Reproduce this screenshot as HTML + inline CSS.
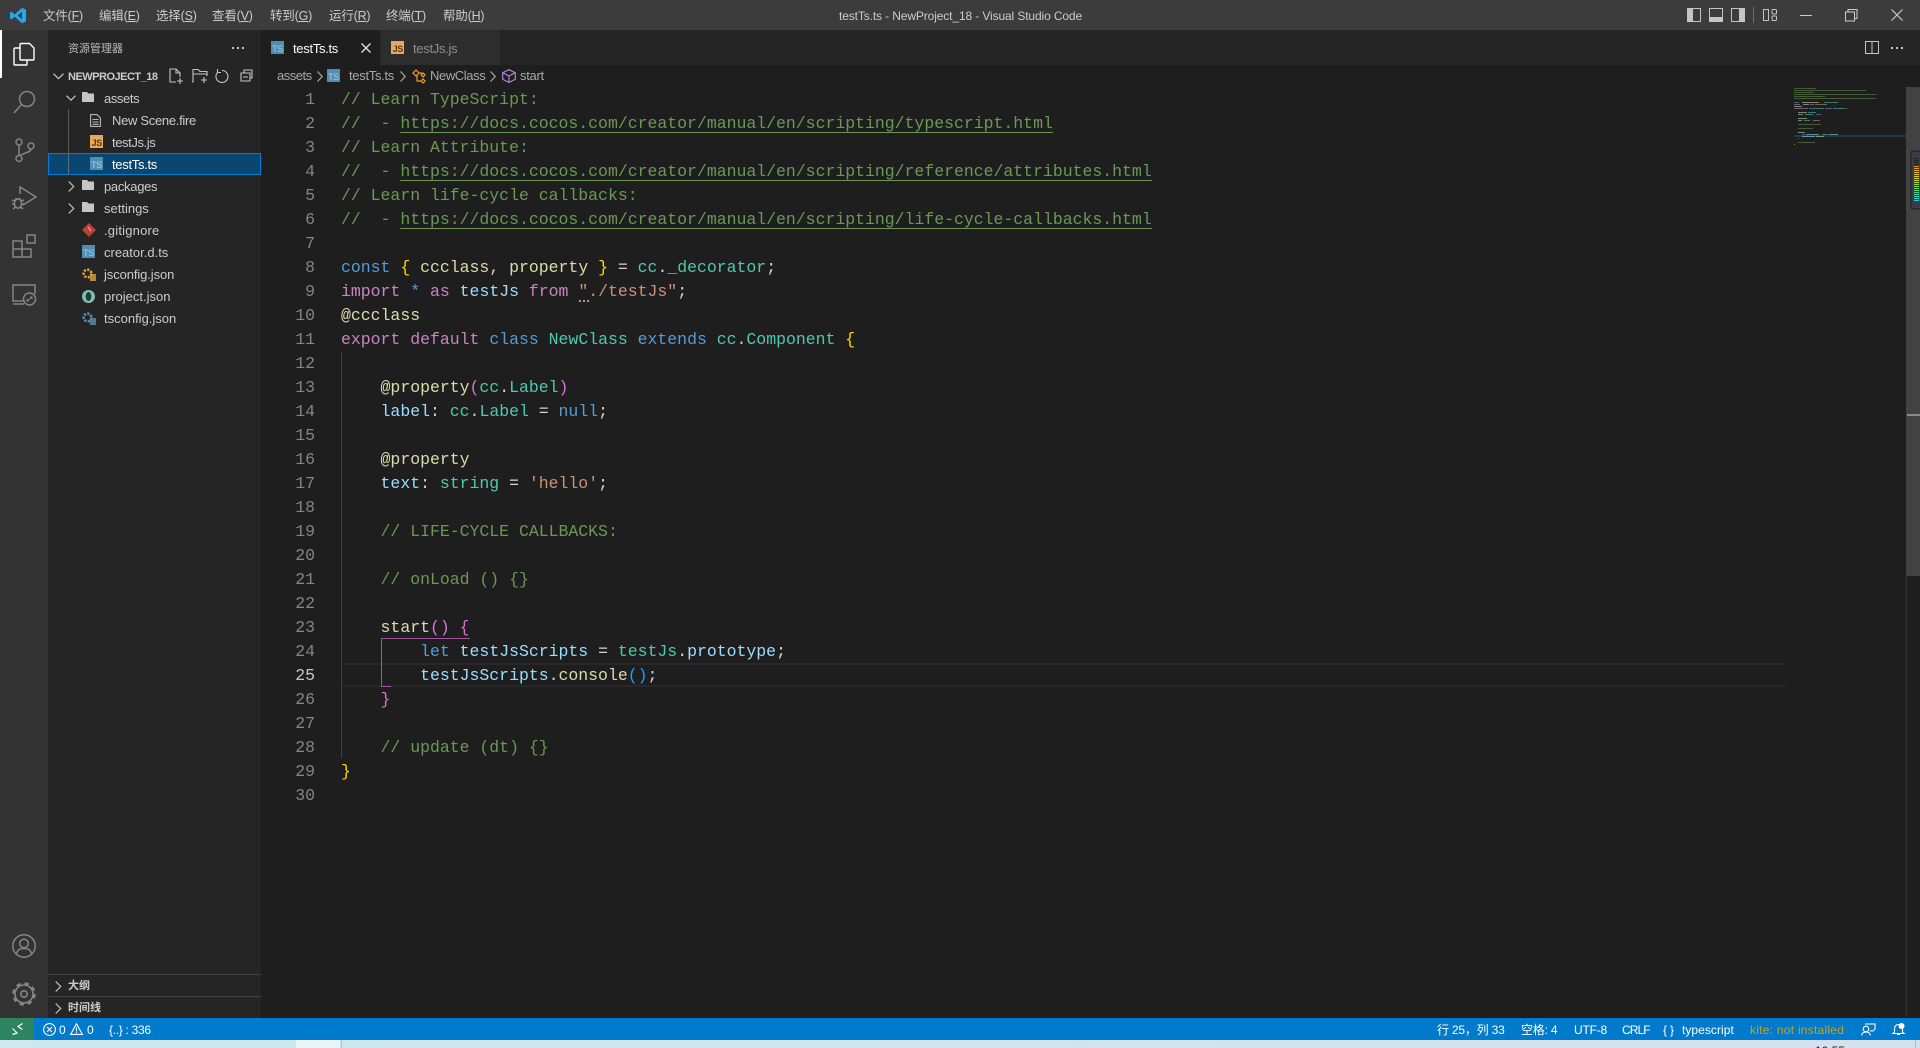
<!DOCTYPE html>
<html lang="zh">
<head>
<meta charset="utf-8">
<title>testTs.ts - NewProject_18 - Visual Studio Code</title>
<style>
*{box-sizing:border-box;margin:0;padding:0}
html,body{width:1920px;height:1048px;overflow:hidden;background:#1e1e1e}
body{position:relative;font-family:"Liberation Sans","Noto Sans CJK SC",sans-serif;font-size:13px;color:#ccc}
.a{position:absolute;white-space:pre}
svg{position:absolute;overflow:visible}
#title{left:0;top:0;width:1920px;height:30px;background:#3c3c3c}
#act{left:0;top:30px;width:48px;height:988px;background:#333}
#side{left:48px;top:30px;width:213px;height:988px;background:#252526}
#tabs{left:261px;top:30px;width:1659px;height:35px;background:#252526}
.m{top:8px;height:16px;line-height:16px;font-size:12.5px;color:#ccc;letter-spacing:-.2px}
.m u{text-decoration:underline;text-underline-offset:1px}
.row{left:48px;width:213px;height:22px;line-height:22px;letter-spacing:-.3px;font-size:13px}
.row span{position:absolute;top:1px}
.ts,.js{position:absolute;width:13px;height:13px;font:normal 9px/16px "Liberation Sans",sans-serif;text-align:right;padding-right:1px;letter-spacing:-.3px}
.ts{background:#4f8eb0;color:#a9cde0}
.js{background:#e6a85c;color:#5a3a14;font-weight:bold}
.chev{position:absolute;fill:none;stroke:#c5c5c5;stroke-width:1.2}
.crumb{top:67px;height:18px;line-height:18px;font-size:13px;color:#a9a9a9;letter-spacing:-.3px}
#code,#nums{font-family:"Liberation Mono",monospace;font-size:16.5px;line-height:24px}
#code{left:341px;top:87.5px;color:#d4d4d4;letter-spacing:-.015px}
#nums{left:270px;top:87.5px;width:45px;text-align:right;color:#858585}
.c{color:#6a9955}
.u{color:#6a9955;text-decoration:underline;text-decoration-thickness:1px;text-underline-offset:4px}
.k{color:#569cd6}.p{color:#c586c0}.v{color:#9cdcfe}.t{color:#4ec9b0}.f{color:#dcdcaa}
.s{color:#ce9178}.g{color:#ffd700}.o{color:#da70d6}.b{color:#179fff}
#status{left:0;top:1018px;width:1920px;height:22px;background:#007acc}
.st{top:1019px;height:22px;line-height:22px;font-size:12px;color:#fff;letter-spacing:-.2px}
#desk{left:0;top:1040px;width:1920px;height:8px;background:linear-gradient(90deg,#cfe7ef 0,#d3e4ee 50%,#d6dfec 100%);overflow:hidden}
</style>
</head>
<body>

<!-- title bar -->
<div class="a" id="title"></div>
<svg style="left:9px;top:7px" width="18" height="17" viewBox="0 0 18 17"><path d="M13 0.8 17 2.6V14.4L13 16.2 5.8 9.6 2.4 12.2 1 11.5V5.5L2.4 4.8 5.8 7.4ZM13 4.8 8.6 8.5 13 12.2Z" fill="#23a9f2" fill-rule="evenodd"/></svg>
<div class="a m" style="left:43px">文件(<u>F</u>)</div>
<div class="a m" style="left:99px">编辑(<u>E</u>)</div>
<div class="a m" style="left:156px">选择(<u>S</u>)</div>
<div class="a m" style="left:212px">查看(<u>V</u>)</div>
<div class="a m" style="left:270px">转到(<u>G</u>)</div>
<div class="a m" style="left:329px">运行(<u>R</u>)</div>
<div class="a m" style="left:386px">终端(<u>T</u>)</div>
<div class="a m" style="left:443px">帮助(<u>H</u>)</div>
<div class="a" style="left:839px;top:8px;height:16px;line-height:16px;font-size:12px;color:#ccc;letter-spacing:-.12px">testTs.ts - NewProject_18 - Visual Studio Code</div>
<svg style="left:1687px;top:8px" width="70" height="14" viewBox="0 0 70 14">
<g fill="none" stroke="#c5c5c5" stroke-width="1"><rect x=".5" y=".5" width="13" height="13"/><rect x="22.5" y=".5" width="13" height="13"/><rect x="44.5" y=".5" width="13" height="13"/></g>
<rect x="1" y="1" width="5" height="12" fill="#c5c5c5"/><rect x="23" y="9" width="12" height="4" fill="#c5c5c5"/><rect x="52" y="1" width="5" height="12" fill="#c5c5c5"/>
</svg>
<div class="a" style="left:1753px;top:7px;width:1px;height:16px;background:#6b6b6b"></div>
<svg style="left:1763px;top:9px" width="14" height="13" fill="none" stroke="#c5c5c5"><rect x=".5" y=".5" width="5" height="11"/><rect x="9" y=".5" width="4.5" height="4.5" rx="1"/><rect x="9" y="7" width="4.5" height="4.5" rx="1"/></svg>
<div class="a" style="left:1800px;top:15px;width:12px;height:1px;background:#ccc"></div>
<svg style="left:1845px;top:9px" width="13" height="13" fill="none" stroke="#ccc"><rect x=".5" y="3" width="9" height="9"/><path d="M3 3V.5h9v9H9.5"/></svg>
<svg style="left:1891px;top:9px" width="12" height="12" fill="none" stroke="#ccc" stroke-width="1.2"><path d="M.5.5 11.5 11.5M11.5.5 .5 11.5"/></svg>

<!-- activity bar -->
<div class="a" id="act"></div>
<div class="a" style="left:0;top:30px;width:2px;height:48px;background:#fff"></div>
<svg style="left:12px;top:42px" width="24" height="24" viewBox="0 0 24 24" fill="none" stroke="#fff" stroke-width="1.4"><path d="M9 1.5H17.5L22 6V17a1 1 0 0 1-1 1H9a1 1 0 0 1-1-1V2.5a1 1 0 0 1 1-1Z"/><path d="M8 6H3A1.2 1.2 0 0 0 2 7V22a1 1 0 0 0 1 1H14a1 1 0 0 0 1-1V18"/></svg>
<svg style="left:12px;top:90px" width="24" height="24" viewBox="0 0 24 24" fill="none" stroke="#858585" stroke-width="1.5"><circle cx="15" cy="9" r="7.5"/><path d="M9.5 14.5 2 23"/></svg>
<svg style="left:12px;top:138px" width="24" height="24" viewBox="0 0 24 24" fill="none" stroke="#858585" stroke-width="1.5"><circle cx="7" cy="4" r="3"/><circle cx="7" cy="20.5" r="3"/><circle cx="19" cy="8" r="3"/><path d="M7 7V17.5M19 11C18.5 15 11 14.5 8 18"/></svg>
<svg style="left:12px;top:186px" width="24" height="24" viewBox="0 0 24 24" fill="none" stroke="#858585" stroke-width="1.5"><path d="M8 8V1L24 11 11 19"/><ellipse cx="6" cy="17.5" rx="3.6" ry="4.6"/><path d="M0 14 3 15M0 18H2.5M1 23 3.5 21M12 14 9 15M12 18H9.5M11 23 8.5 21M3 13H9"/></svg>
<svg style="left:12px;top:234px" width="24" height="24" viewBox="0 0 24 24" fill="none" stroke="#858585" stroke-width="1.5"><path d="M1 7H10V23H1ZM1 15H19V23H10V7"/><rect x="15" y="1" width="8" height="8"/></svg>
<svg style="left:12px;top:284px" width="24" height="22" viewBox="0 0 24 22" fill="none" stroke="#858585" stroke-width="1.5"><path d="M11 17H1V1H23V10M1 20H12"/><circle cx="17.5" cy="15" r="6" fill="#333"/><path d="M15 17 20 13M15 15l0 2 2 0M20 15v-2h-2" stroke-width="1"/></svg>
<svg style="left:12px;top:934px" width="24" height="24" viewBox="0 0 24 24" fill="none" stroke="#858585" stroke-width="1.5"><circle cx="12" cy="12" r="11.2"/><circle cx="12" cy="9.5" r="4.3"/><path d="M4.5 20C5 16 8 14.5 12 14.5S19 16 19.500 20"/></svg>
<svg style="left:12px;top:982px" width="24" height="24" viewBox="0 0 24 24" fill="none" stroke="#858585"><circle cx="12" cy="12" r="9" stroke-width="1.6"/><circle cx="12" cy="12" r="10.4" stroke-width="2.8" stroke-dasharray="4.2 4"/><circle cx="12" cy="12" r="3.2" stroke-width="1.6"/></svg>

<!-- sidebar -->
<div class="a" id="side"></div>
<div class="a" style="left:68px;top:41px;height:16px;line-height:16px;font-size:11px;color:#bbb">资源管理器</div>
<svg style="left:232px;top:47px" width="12" height="3" fill="#c5c5c5"><rect width="2" height="2"/><rect x="5" width="2" height="2"/><rect x="10" width="2" height="2"/></svg>

<div class="a row" style="top:65px;font-weight:bold;font-size:11px;letter-spacing:-.5px;color:#ccc"><span style="left:20px">NEWPROJECT_18</span></div>
<svg class="chev" style="left:53px;top:73px" width="11" height="7"><path d="M.5 .7 5.500 5.700 10.500 .7"/></svg>
<svg style="left:168px;top:68px" width="88" height="16" viewBox="0 0 88 16" fill="none" stroke="#c5c5c5" stroke-width="1.1">
<path d="M8 14H2V1H8L12 5V9M8 1V5H12M12 10V16M9 13H15"/>
<path d="M24 14H25V1.500H30L32 3.500H39V8M36 9V15M33 12H39M25 6H39"/>
<path d="M50 4A6 6 0 1 0 54 2.500M49.500 1V4.500H53"/>
<path d="M73 5H82V13H73ZM76 5V2H84V10H82M75 9H80"/>
</svg>

<div class="a row" style="top:87px;letter-spacing:-.4px"><span style="left:56px;color:#ccc">assets</span></div>
<svg class="chev" style="left:66px;top:95px" width="10" height="7"><path d="M.5 .7 5 5.200 9.500 .7"/></svg>
<svg style="left:82px;top:92px" width="13" height="11" fill="#c5c5c5"><path d="M0 0H5L6.500 1.500H12V10H0Z"/></svg>
<div class="a" style="left:68px;top:109px;width:1px;height:66px;background:#585858"></div>

<div class="a row" style="top:109px"><span style="left:64px;color:#ccc">New Scene.fire</span></div>
<svg style="left:90px;top:114px" width="11" height="13" fill="none" stroke="#b8b8b8" stroke-width="1.1"><path d="M.6.6H7L10.400 4V12.400H.6ZM2.500 5.500H8.500M2.500 8H8.500M2.500 10.300H8.500"/></svg>

<div class="a row" style="top:131px;letter-spacing:-.4px"><i class="js" style="left:42px;top:4px">JS</i><span style="left:64px;color:#ccc">testJs.js</span></div>

<div class="a" style="left:48px;top:153px;width:213px;height:22px;background:#094771;border:1px solid #007fd4"></div>
<div class="a" style="left:68px;top:154px;width:1px;height:21px;background:#5a7080"></div>
<div class="a row" style="top:153px"><i class="ts" style="left:42px;top:4px">TS</i><span style="left:64px;color:#fff">testTs.ts</span></div>

<div class="a row" style="top:175px"><span style="left:56px;color:#ccc">packages</span></div>
<svg class="chev" style="left:68px;top:181px" width="7" height="11"><path d="M.7 .5 5.700 5.500 .7 10.500"/></svg>
<svg style="left:82px;top:180px" width="13" height="11" fill="#c5c5c5"><path d="M0 0H5L6.500 1.500H12V10H0Z"/></svg>
<div class="a row" style="top:197px;letter-spacing:0"><span style="left:56px;color:#ccc">settings</span></div>
<svg class="chev" style="left:68px;top:203px" width="7" height="11"><path d="M.7 .5 5.700 5.500 .7 10.500"/></svg>
<svg style="left:82px;top:202px" width="13" height="11" fill="#c5c5c5"><path d="M0 0H5L6.500 1.500H12V10H0Z"/></svg>

<div class="a row" style="top:219px;letter-spacing:.2px"><span style="left:56px;color:#ccc">.gitignore</span></div>
<svg style="left:82px;top:223px" width="14" height="14"><path d="M7 0 14 7 7 14 0 7Z" fill="#b8413a"/><path d="M6 4 9 8" stroke="#e8c0b8" stroke-width="1"/></svg>
<div class="a row" style="top:241px;letter-spacing:0"><i class="ts" style="left:34px;top:4px">TS</i><span style="left:56px;color:#ccc">creator.d.ts</span></div>
<div class="a row" style="top:263px;letter-spacing:-.1px"><span style="left:56px;color:#ccc">jsconfig.json</span></div>
<svg style="left:82px;top:268px" width="14" height="13" fill="none"><circle cx="5.500" cy="5.500" r="3.800" stroke="#d9a441" stroke-width="2.600" stroke-dasharray="2.200 1.300"/><circle cx="5.500" cy="5.500" r="1.600" fill="#252526"/><rect x="8" y="6" width="6" height="7" fill="#d9a441" opacity=".8"/></svg>
<div class="a row" style="top:285px;letter-spacing:0"><span style="left:56px;color:#ccc">project.json</span></div>
<svg style="left:82px;top:290px" width="13" height="13"><circle cx="6.500" cy="6.500" r="6.500" fill="#80bfa9"/><ellipse cx="6.500" cy="6.500" rx="2.800" ry="4.500" fill="#1f3c3c"/></svg>
<div class="a row" style="top:307px;letter-spacing:0"><span style="left:56px;color:#ccc">tsconfig.json</span></div>
<svg style="left:82px;top:312px" width="14" height="13" fill="none"><circle cx="5.500" cy="5.500" r="3.800" stroke="#5f8fad" stroke-width="2.600" stroke-dasharray="2.200 1.300"/><circle cx="5.500" cy="5.500" r="1.600" fill="#252526"/><rect x="8" y="6" width="6" height="7" fill="#5f8fad" opacity=".8"/></svg>

<div class="a" style="left:48px;top:974px;width:213px;height:1px;background:#414141"></div>
<div class="a" style="left:48px;top:996px;width:213px;height:1px;background:#414141"></div>
<svg class="chev" style="left:55px;top:981px" width="7" height="11"><path d="M.7 .5 5.700 5.500 .7 10.500"/></svg>
<svg class="chev" style="left:55px;top:1003px" width="7" height="11"><path d="M.7 .5 5.700 5.500 .7 10.500"/></svg>
<div class="a" style="left:68px;top:978px;height:16px;line-height:16px;font-size:11px;font-weight:bold;color:#ccc">大纲</div>
<div class="a" style="left:68px;top:1000px;height:16px;line-height:16px;font-size:11px;font-weight:bold;color:#ccc">时间线</div>

<!-- tabs -->
<div class="a" id="tabs"></div>
<div class="a" style="left:261px;top:30px;width:119px;height:35px;background:#1e1e1e"></div>
<div class="a" style="left:381px;top:30px;width:119px;height:35px;background:#2d2d2d"></div>
<i class="ts" style="left:271px;top:41px">TS</i>
<div class="a" style="left:293px;top:40px;height:18px;line-height:18px;color:#fff;letter-spacing:-.3px">testTs.ts</div>
<svg style="left:361px;top:43px" width="10" height="10" fill="none" stroke="#e0e0e0" stroke-width="1.4"><path d="M.5.500 9.500 9.500M9.500.500 .5 9.500"/></svg>
<i class="js" style="left:391px;top:41px">JS</i>
<div class="a" style="left:413px;top:40px;height:18px;line-height:18px;color:#8f8f8f;letter-spacing:-.3px">testJs.js</div>
<svg style="left:1865px;top:41px" width="14" height="13" fill="none" stroke="#c5c5c5"><rect x=".5" y=".5" width="13" height="12"/><path d="M7 .5V12.500"/></svg>
<svg style="left:1891px;top:47px" width="12" height="3" fill="#c5c5c5"><rect width="2" height="2"/><rect x="5" width="2" height="2"/><rect x="10" width="2" height="2"/></svg>

<!-- breadcrumbs -->
<div class="a crumb" style="left:277px;letter-spacing:-.5px">assets</div>
<svg class="chev" style="left:317px;top:71px;stroke:#a9a9a9" width="6" height="11"><path d="M.5 .5 5.200 5.500 .5 10.500"/></svg>
<i class="ts" style="left:327px;top:69px">TS</i>
<div class="a crumb" style="left:349px">testTs.ts</div>
<svg class="chev" style="left:400px;top:71px;stroke:#a9a9a9" width="6" height="11"><path d="M.5 .5 5.200 5.500 .5 10.500"/></svg>
<svg style="left:412px;top:69px" width="14" height="14" fill="none" stroke="#ee9d28" stroke-width="1.200"><path d="M1 4 4 1 7 4 4 7ZM9 6 11 4 13 6 11 8ZM9 12 11 10 13 12 11 14ZM6 4H10M5 6 5 12H9"/></svg>
<div class="a crumb" style="left:430px;letter-spacing:-.4px">NewClass</div>
<svg class="chev" style="left:490px;top:71px;stroke:#a9a9a9" width="6" height="11"><path d="M.5 .5 5.200 5.500 .5 10.500"/></svg>
<svg style="left:502px;top:69px" width="14" height="14" fill="none" stroke="#b180d7" stroke-width="1.200"><path d="M7 .7 13.300 3.700V10.300L7 13.500 .7 10.300V3.700ZM.7 3.700 7 7 13.300 3.700M7 7V13.500"/></svg>
<div class="a crumb" style="left:520px">start</div>

<!-- editor decorations -->
<div class="a" style="left:342px;top:663px;width:1444px;height:24px;border-top:2px solid #282828;border-bottom:2px solid #282828"></div>
<div class="a" style="left:341px;top:351px;width:1px;height:407px;background:#404040"></div>
<div class="a" style="left:381px;top:638px;width:89px;height:1px;background:#a0559e"></div>
<div class="a" style="left:381px;top:638px;width:1px;height:49px;background:#a0559e"></div>
<div class="a" style="left:381px;top:686px;width:10px;height:1px;background:#a0559e"></div>
<svg style="left:579px;top:300px" width="10" height="2" fill="#999"><rect width="2" height="2"/><rect x="4" width="2" height="2"/><rect x="8" width="2" height="2"/></svg>

<!-- line numbers -->
<div class="a" id="nums">1
2
3
4
5
6
7
8
9
10
11
12
13
14
15
16
17
18
19
20
21
22
23
24
<span style="color:#c6c6c6">25</span>
26
27
28
29
30</div>

<!-- code -->
<div class="a" id="code"><span class="c">// Learn TypeScript:</span>
<span class="c">//  - </span><span class="u">https://docs.cocos.com/creator/manual/en/scripting/typescript.html</span>
<span class="c">// Learn Attribute:</span>
<span class="c">//  - </span><span class="u">https://docs.cocos.com/creator/manual/en/scripting/reference/attributes.html</span>
<span class="c">// Learn life-cycle callbacks:</span>
<span class="c">//  - </span><span class="u">https://docs.cocos.com/creator/manual/en/scripting/life-cycle-callbacks.html</span>

<span class="k">const</span> <span class="g">{</span> <span class="f">ccclass</span>, <span class="f">property</span> <span class="g">}</span> = <span class="t">cc</span>.<span class="t">_decorator</span>;
<span class="p">import</span> <span class="k">*</span> <span class="p">as</span> <span class="v">testJs</span> <span class="p">from</span> <span class="s">"./testJs"</span>;
<span class="f">@ccclass</span>
<span class="p">export</span> <span class="p">default</span> <span class="k">class</span> <span class="t">NewClass</span> <span class="k">extends</span> <span class="t">cc</span>.<span class="t">Component</span> <span class="g">{</span>

    <span class="f">@property</span><span class="o">(</span><span class="t">cc</span>.<span class="t">Label</span><span class="o">)</span>
    <span class="v">label</span>: <span class="t">cc</span>.<span class="t">Label</span> = <span class="k">null</span>;

    <span class="f">@property</span>
    <span class="v">text</span>: <span class="t">string</span> = <span class="s">'hello'</span>;

    <span class="c">// LIFE-CYCLE CALLBACKS:</span>

    <span class="c">// onLoad () {}</span>

    <span class="f">start</span><span class="o">()</span> <span class="o">{</span>
        <span class="k">let</span> <span class="v">testJsScripts</span> = <span class="t">testJs</span>.<span class="v">prototype</span>;
        <span class="v">testJsScripts</span>.<span class="f">console</span><span class="b">()</span>;
    <span class="o">}</span>

    <span class="c">// update (dt) {}</span>
<span class="g">}</span></div>

<!-- minimap -->
<svg style="left:1794px;top:87px" width="112" height="64" viewBox="0 0 112 64">
<rect x="0" y="48" width="112" height="2" fill="#264f78" opacity=".55"/>
<g fill="#6a9955" opacity=".5">
<rect x="0" y="1" width="22" height="1"/><rect x="0" y="3" width="72" height="1"/><rect x="0" y="5" width="20" height="1"/><rect x="0" y="7" width="82" height="1"/><rect x="0" y="9" width="31" height="1"/><rect x="0" y="11" width="82" height="1"/>
<rect x="4" y="37" width="23" height="1"/><rect x="4" y="41" width="15" height="1"/><rect x="4" y="55" width="17" height="1"/>
</g>
<g opacity=".55">
<rect x="0" y="15" width="5" height="1" fill="#569cd6"/><rect x="8" y="15" width="17" height="1" fill="#dcdcaa"/><rect x="30" y="15" width="14" height="1" fill="#4ec9b0"/>
<rect x="0" y="17" width="6" height="1" fill="#c586c0"/><rect x="9" y="17" width="6" height="1" fill="#9cdcfe"/><rect x="16" y="17" width="4" height="1" fill="#c586c0"/><rect x="21" y="17" width="12" height="1" fill="#ce9178"/>
<rect x="0" y="19" width="8" height="1" fill="#dcdcaa"/>
<rect x="0" y="21" width="14" height="1" fill="#c586c0"/><rect x="15" y="21" width="13" height="1" fill="#569cd6"/><rect x="22" y="21" width="8" height="1" fill="#4ec9b0"/><rect x="31" y="21" width="7" height="1" fill="#569cd6"/><rect x="39" y="21" width="12" height="1" fill="#4ec9b0"/><rect x="52" y="21" width="1" height="1" fill="#ffd700"/>
<rect x="4" y="25" width="9" height="1" fill="#dcdcaa"/><rect x="14" y="25" width="8" height="1" fill="#4ec9b0"/>
<rect x="4" y="27" width="5" height="1" fill="#9cdcfe"/><rect x="11" y="27" width="8" height="1" fill="#4ec9b0"/><rect x="22" y="27" width="5" height="1" fill="#569cd6"/>
<rect x="4" y="31" width="9" height="1" fill="#dcdcaa"/>
<rect x="4" y="33" width="4" height="1" fill="#9cdcfe"/><rect x="10" y="33" width="6" height="1" fill="#4ec9b0"/><rect x="19" y="33" width="7" height="1" fill="#ce9178"/>
<rect x="4" y="45" width="7" height="1" fill="#dcdcaa"/>
<rect x="8" y="47" width="3" height="1" fill="#569cd6"/><rect x="12" y="47" width="13" height="1" fill="#9cdcfe"/><rect x="28" y="47" width="6" height="1" fill="#4ec9b0"/><rect x="35" y="47" width="9" height="1" fill="#9cdcfe"/>
<rect x="8" y="49" width="13" height="1" fill="#9cdcfe"/><rect x="22" y="49" width="8" height="1" fill="#dcdcaa"/>
<rect x="4" y="51" width="1" height="1" fill="#da70d6"/><rect x="0" y="57" width="1" height="1" fill="#ffd700"/>
</g>
</svg>

<!-- scrollbar -->
<div class="a" style="left:1906px;top:87px;width:1px;height:931px;background:#333"></div>
<div class="a" style="left:1906px;top:87px;width:14px;height:489px;background:#424242"></div>
<div class="a" style="left:1907px;top:414px;width:13px;height:2px;background:#8a8a8a"></div>
<svg style="left:1911px;top:151px" width="9" height="58">
<rect width="12" height="58" rx="2" fill="#383b4a" stroke="#1e1e1e"/>
<g>
<rect x="3" y="7" width="5" height="1" fill="#222"/><rect x="3" y="9" width="5" height="1" fill="#222"/><rect x="3" y="11" width="5" height="1" fill="#222"/><rect x="3" y="13" width="5" height="1" fill="#222"/>
<rect x="3" y="15" width="5" height="1" fill="#d8832f"/><rect x="3" y="17" width="5" height="1" fill="#d89a2c"/><rect x="3" y="19" width="5" height="1" fill="#dca82c"/><rect x="3" y="21" width="5" height="1" fill="#dcb82c"/><rect x="3" y="23" width="5" height="1" fill="#dcc42c"/><rect x="3" y="25" width="5" height="1" fill="#dcd030"/><rect x="3" y="27" width="5" height="1" fill="#d0d034"/><rect x="3" y="29" width="5" height="1" fill="#c4d03c"/><rect x="3" y="31" width="5" height="1" fill="#b0d044"/><rect x="3" y="33" width="5" height="1" fill="#9cd04c"/><rect x="3" y="35" width="5" height="1" fill="#84d060"/><rect x="3" y="37" width="5" height="1" fill="#6cd074"/><rect x="3" y="39" width="5" height="1" fill="#58d088"/><rect x="3" y="41" width="5" height="1" fill="#48d09c"/><rect x="3" y="43" width="5" height="1" fill="#40d0ac"/><rect x="3" y="45" width="5" height="1" fill="#38d0b4"/><rect x="3" y="47" width="5" height="1" fill="#30d0bc"/><rect x="3" y="49" width="5" height="1" fill="#30d0c0"/>
</g>
</svg>

<!-- status bar -->
<div class="a" id="status"></div>
<div class="a" style="left:0;top:1018px;width:34px;height:22px;background:#2b8561"></div>
<svg style="left:12px;top:1023px" width="11" height="12" fill="none" stroke="#fff" stroke-width="1.200"><path d="M.5 5.500 5 10 .5 11.500M10.500 .5 6 3.500 10.500 6.500"/></svg>
<svg style="left:43px;top:1023px" width="13" height="13" fill="none" stroke="#fff" stroke-width="1.100"><circle cx="6.500" cy="6.500" r="5.900"/><path d="M4 4 9 9M9 4 4 9"/></svg>
<div class="a st" style="left:59px">0</div>
<svg style="left:70px;top:1023px" width="13" height="12" fill="none" stroke="#fff" stroke-width="1.100"><path d="M6.500.8 12.400 11.400H.6ZM6.500 4.500V8.500M6.500 9.200V10.400"/></svg>
<div class="a st" style="left:87px">0</div>
<div class="a st" style="left:109px;letter-spacing:-.3px">{..} : 336</div>
<div class="a st" style="left:1437px">行 25，列 33</div>
<div class="a st" style="left:1521px">空格: 4</div>
<div class="a st" style="left:1574px">UTF-8</div>
<div class="a st" style="left:1622px;letter-spacing:-.9px">CRLF</div>
<div class="a st" style="left:1663px">{ }</div>
<div class="a st" style="left:1682px;letter-spacing:.05px">typescript</div>
<div class="a st" style="left:1750px;color:#c0a42c;letter-spacing:.25px">kite: not installed</div>
<svg style="left:1861px;top:1023px" width="15" height="13" fill="none" stroke="#fff" stroke-width="1.100"><circle cx="5" cy="6" r="2.800"/><path d="M.5 12.500C1 10 3 9 5 9S9 10 9.500 12.500M4 1H14V6L12 8H9"/></svg>
<svg style="left:1893px;top:1023px" width="12" height="13"><path d="M1.500 9.500V5.500C1.500 3 3.500 1.500 5.500 1.500S9.500 3 9.500 5.500V9.500L11 10.500H0Z" fill="none" stroke="#fff" stroke-width="1.100"/><circle cx="8.500" cy="3" r="3" fill="#fff"/><path d="M4 11.500H7" stroke="#fff"/></svg>

<!-- desktop peek -->
<div class="a" id="desk">
<div class="a" style="left:296px;top:0;width:44px;height:8px;background:#e9f3f8"></div>
<div class="a" style="left:341px;top:0;width:1px;height:8px;background:#b8c4cc"></div>
<div class="a" style="left:1915px;top:0;width:1px;height:8px;background:#b4bcc6"></div>
<div class="a" style="left:1815px;top:4px;height:14px;line-height:14px;font-size:12px;color:#222">10:55</div>
</div>

</body>
</html>
